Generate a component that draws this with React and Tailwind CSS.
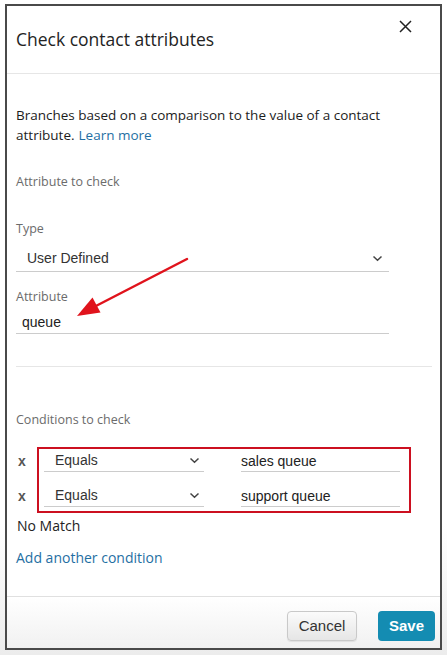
import React from 'react';

const ui = { fontFamily: '"Open Sans", "Noto Sans", sans-serif' };
const helv = { fontFamily: '"Liberation Sans", Arial, sans-serif' };

function Chevron() {
  return (
    <svg width="11" height="7" viewBox="0 0 11 7" fill="none">
      <path d="M1.5 1.5 L5.5 5.2 L9.5 1.5" stroke="#444" strokeWidth="1.5" />
    </svg>
  );
}

function ConditionRow({ value }) {
  return (
    <div className="flex items-start h-[35px]">
      <span className="w-[27px] pl-[1px] mt-[2px] text-[14px] font-bold text-[#555]" style={helv}>x</span>
      <div className="w-[160px] h-[23px] flex items-center justify-between border-b border-[#ccc] pl-[11px] pr-[4px]">
        <span className="text-[14px] text-[#333]" style={helv}>Equals</span>
        <Chevron />
      </div>
      <div className="ml-[37px] w-[159px] h-[23px] flex items-center border-b border-[#ccc]">
        <span className="text-[14px] text-[#222] pt-[2px]" style={helv}>{value}</span>
      </div>
    </div>
  );
}

export default function App() {
  return (
    <div className="relative w-[447px] h-[655px] bg-gradient-to-b from-white from-80% to-[#ececec] pt-[4px] pl-[5px] pr-[5px]">
      <div className="h-[646px] border-2 border-[#4a4a4a] bg-white flex flex-col">
        {/* header */}
        <div className="h-[68px] flex items-start justify-between pl-[9px] pr-[27px] border-b border-[#e6e6e6]">
          <h1 className="pt-[21px] text-[17.5px] leading-[24px] text-[#232323]" style={ui}>Check contact attributes</h1>
          <button className="mt-[13px] w-[14px] h-[14px]">
            <svg width="13" height="13" viewBox="0 0 13 13" fill="none">
              <path d="M1 1 L12 12 M12 1 L1 12" stroke="#222" strokeWidth="1.5" />
            </svg>
          </button>
        </div>

        {/* body */}
        <div className="flex-1 pl-[9px] pr-[8px]">
          <div className="pt-[31px] text-[13.5px] leading-[20px] text-[#1c1c1c]" style={ui}>
            <div>Branches based on a comparison to the value of a contact</div>
            <div className="flex gap-[4px]">
              <span>attribute.</span>
              <span className="text-[#1f6fa3]">Learn more</span>
            </div>
          </div>
          <div className="mt-[28px] text-[12.5px] leading-[18px] text-[#6b6b6b]" style={ui}>Attribute to check</div>
          <div className="mt-[29px] text-[12.5px] leading-[18px] text-[#6b6b6b]" style={ui}>Type</div>
          <div className="mt-[7px] w-[373px] h-[27px] flex items-center justify-between border-b border-[#ccc] pl-[11px] pr-[6px]">
            <span className="text-[14px] text-[#333]" style={helv}>User Defined</span>
            <Chevron />
          </div>
          <div className="mt-[16px] text-[12.5px] leading-[18px] text-[#6b6b6b]" style={ui}>Attribute</div>
          <div className="mt-[5px] w-[373px] h-[23px] flex items-center border-b border-[#ccc] pl-[6px]">
            <span className="text-[14px] text-[#222]" style={helv}>queue</span>
          </div>
          <div className="mt-[32px] border-t border-[#e6e6e6]" />
          <div className="mt-[44px] text-[12.5px] leading-[18px] text-[#6b6b6b]" style={ui}>Conditions to check</div>

          <div className="relative mt-[20px] pl-[1px]">
            <ConditionRow value="sales queue" />
            <ConditionRow value="support queue" />
            <div className="absolute left-[21px] top-[-2px] w-[374px] h-[66px] border-2 border-[#cc1020]" />
          </div>

          <div className="mt-[-3px] pl-[1px] text-[14px] leading-[20px] text-[#222]" style={ui}>No Match</div>
          <div className="mt-[12px] text-[14px] leading-[20px] text-[#1f6fa3]" style={ui}>Add another condition</div>
        </div>

        {/* footer */}
        <div className="h-[52px] border-t border-[#e0e0e0] bg-gradient-to-b from-white to-[#f1f1f1] flex items-start justify-end gap-[21px] pt-[14px] pr-[5px]">
          <button className="w-[70px] h-[30px] rounded-[4px] border border-[#c9c9c9] bg-gradient-to-b from-[#fbfbfb] to-[#e6e6e6] text-[15px] text-[#333] shadow-[0_1px_1px_rgba(0,0,0,0.08)]" style={helv}>
            Cancel
          </button>
          <button className="w-[57px] h-[30px] rounded-[4px] bg-[#148cb2] text-[15px] font-bold text-white" style={helv}>
            Save
          </button>
        </div>
      </div>

      {/* annotation arrow */}
      <svg className="absolute left-0 top-0 pointer-events-none" width="447" height="655">
        <line x1="187" y1="259" x2="92" y2="308" stroke="#e0131c" strokeWidth="2.5" strokeLinecap="round" />
        <polygon points="77,316 92.5,297.5 100.5,312.5" fill="#e0131c" />
      </svg>
    </div>
  );
}
